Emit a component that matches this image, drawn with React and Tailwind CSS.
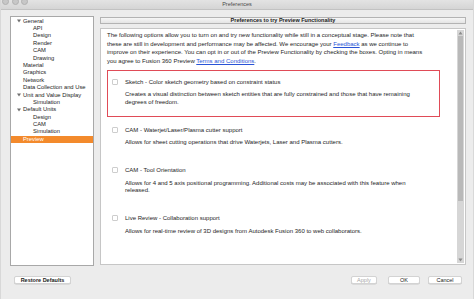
import React from "react";

const tree = [
  { label: "General", level: 0, caret: true },
  { label: "API", level: 1 },
  { label: "Design", level: 1 },
  { label: "Render", level: 1 },
  { label: "CAM", level: 1 },
  { label: "Drawing", level: 1 },
  { label: "Material", level: 0 },
  { label: "Graphics", level: 0 },
  { label: "Network", level: 0 },
  { label: "Data Collection and Use", level: 0 },
  { label: "Unit and Value Display", level: 0, caret: true },
  { label: "Simulation", level: 1 },
  { label: "Default Units", level: 0, caret: true },
  { label: "Design", level: 1 },
  { label: "CAM", level: 1 },
  { label: "Simulation", level: 1 },
  { label: "Preview", level: 0, active: true },
];

const options = [
  {
    title: "Sketch - Color sketch geometry based on constraint status",
    desc: [
      "Creates a visual distinction between sketch entities that are fully constrained and those that have remaining",
      "degrees of freedom.",
    ],
    highlight: true,
  },
  {
    title: "CAM - Waterjet/Laser/Plasma cutter support",
    desc: ["Allows for sheet cutting operations that drive Waterjets, Laser and Plasma cutters."],
  },
  {
    title: "CAM - Tool Orientation",
    desc: [
      "Allows for 4 and 5 axis positional programming. Additional costs may be associated with this feature when",
      "released.",
    ],
  },
  {
    title: "Live Review - Collaboration support",
    desc: ["Allows for real-time review of 3D designs from Autodesk Fusion 360 to web collaborators."],
  },
];

function Caret() {
  return (
    <svg width="4" height="4" viewBox="0 0 4 4" className="shrink-0">
      <path d="M0 0.5 L4 0.5 L2 3.5 Z" fill="#707070" />
    </svg>
  );
}

function Sidebar() {
  return (
    <div className="w-[84px] h-[250px] bg-white border border-[#a8a8a8] pt-[0.6px]">
      {tree.map((item, i) => (
        <div
          key={i}
          className={`h-[7.4px] flex items-center whitespace-nowrap text-[5.8px] leading-[7.4px] ${
            item.active ? "bg-[#f38a2c] text-white" : "text-[#1c1c1c]"
          }`}
        >
          <div className="w-[12px] flex justify-end pr-[2px]">{item.caret && <Caret />}</div>
          <span className={item.level === 1 ? "ml-[10px]" : ""}>{item.label}</span>
        </div>
      ))}
    </div>
  );
}

function Checkbox() {
  return <div className="w-[6px] h-[6px] shrink-0 rounded-[1px] border border-[#cdcdcd] bg-white" />;
}

function Option({ title, desc, highlight }) {
  const frame = highlight ? "border-solid border-[#e04b57]" : "border-solid border-white";
  return (
    <div className={`w-[333px] mb-[1px] border pt-[7px] pb-[9px] pl-[4px] ${frame}`}>
      <div className="flex items-center h-[8px]">
        <Checkbox />
        <span className="ml-[7px] leading-[8px] whitespace-nowrap">{title}</span>
      </div>
      <div className="ml-[13px] mt-[5.6px]">
        {desc.map((line, i) => (
          <div key={i} className="leading-[7.7px] whitespace-nowrap">
            {line}
          </div>
        ))}
      </div>
    </div>
  );
}

function Scrollbar() {
  return (
    <div className="w-[7px] my-[1px] mr-[1px] bg-[#d6d6d6] flex flex-col items-center">
      <svg width="5" height="4" viewBox="0 0 5 4" className="mt-[1px]">
        <path d="M0.5 3.5 L4.5 3.5 L2.5 0.5 Z" fill="#8c8c8c" />
      </svg>
      <div className="w-[5px] h-[165px] mt-[1px] bg-[#b9b9b9]" />
      <div className="flex-1" />
      <svg width="5" height="4" viewBox="0 0 5 4" className="mb-[1px]">
        <path d="M0.5 0.5 L4.5 0.5 L2.5 3.5 Z" fill="#8c8c8c" />
      </svg>
    </div>
  );
}

function Button({ children, width, muted, bold }) {
  return (
    <button
      className={`${width} h-[8px] rounded-[2px] bg-white border border-[#d3d3d3] shadow-[0_0.5px_0.5px_rgba(0,0,0,0.15)] text-[5.5px] leading-[6px] ${
        muted ? "text-[#a6a6a6]" : "text-[#222]"
      } ${bold ? "font-bold" : ""}`}
    >
      {children}
    </button>
  );
}

export default function App() {
  return (
    <div className="w-[474px] h-[299px] overflow-hidden bg-[#ececec] flex flex-col font-[family-name:'Liberation_Sans',Arial,sans-serif] text-[#1e1e1e] border-x border-[#d8d8d8]">
      {/* Title bar */}
      <div className="h-[10px] grid grid-cols-3 items-start bg-gradient-to-b from-[#e3e3e3] to-[#d5d5d5] border-b border-[#c2c2c2]">
        <div className="flex gap-[2.5px] pl-[1px] -mt-[2px]">
          <div className="w-[7px] h-[7px] rounded-full bg-[#c7c7c7] border border-[#b1b1b1]" />
          <div className="w-[7px] h-[7px] rounded-full bg-[#c7c7c7] border border-[#b1b1b1]" />
          <div className="w-[7px] h-[7px] rounded-full bg-[#c7c7c7] border border-[#b1b1b1]" />
        </div>
        <div className="text-center text-[5.5px] leading-[8px] text-[#4a4a4a]">Preferences</div>
        <div />
      </div>

      {/* Body */}
      <div className="flex pt-[6px] pl-[9px]">
        <Sidebar />
        <div className="ml-[6px] w-[366px] pt-[1px]">
          <div className="h-[7px] border border-[#b3b3b3] bg-gradient-to-b from-[#f6f6f6] to-[#e4e4e4] text-center text-[5.5px] leading-[5px] font-bold text-[#1a1a1a]">
            Preferences to try Preview Functionality
          </div>
          <div className="mt-[4px] h-[237px] bg-white border border-[#c6c6c6] flex">
            <div className="flex-1 pl-[6px] pt-[2px] text-[6px] leading-[8.5px]">
              <div className="whitespace-nowrap">
                The following options allow you to turn on and try new functionality while still in a conceptual stage. Please note that
              </div>
              <div className="whitespace-nowrap">
                these are still in development and performance may be affected. We encourage your{" "}
                <span className="text-[#2853d6] underline">Feedback</span> as we continue to
              </div>
              <div className="whitespace-nowrap">
                improve on their experience. You can opt in or out of the Preview Functionality by checking the boxes. Opting in means
              </div>
              <div className="whitespace-nowrap">
                you agree to Fusion 360 Preview <span className="text-[#2853d6] underline">Terms and Conditions</span>.
              </div>
              <div className="mt-[4.7px]">
                {options.map((o, i) => (
                  <Option key={i} {...o} />
                ))}
              </div>
            </div>
            <Scrollbar />
          </div>
        </div>
      </div>

      {/* Footer buttons */}
      <div className="flex items-center mt-[10px] pl-[13px] pr-[11px]">
        <Button width="w-[57px]" bold>
          Restore Defaults
        </Button>
        <div className="flex-1" />
        <Button width="w-[26px]" muted>
          Apply
        </Button>
        <div className="w-[11px]" />
        <Button width="w-[32px]">OK</Button>
        <div className="w-[8px]" />
        <Button width="w-[34px]">Cancel</Button>
      </div>
    </div>
  );
}
